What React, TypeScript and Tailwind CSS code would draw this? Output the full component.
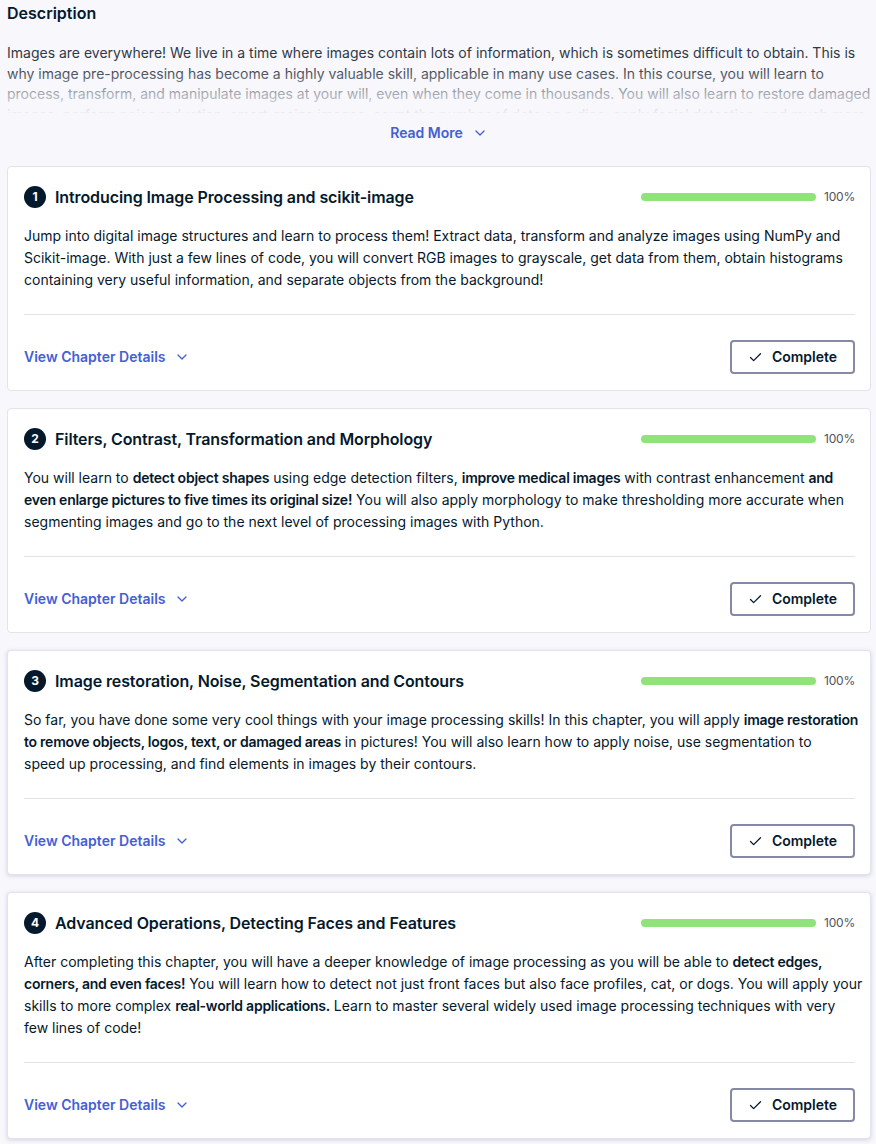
import React from "react";
import { ChevronDown, Check } from "lucide-react";

type Seg = string | { b: string };
type Chapter = { n: number; title: string; lines: Seg[][]; shadow?: boolean };

const chapters: Chapter[] = [
  {
    n: 1,
    title: "Introducing Image Processing and scikit-image",
    lines: [
      ["Jump into digital image structures and learn to process them! Extract data, transform and analyze images using NumPy and"],
      ["Scikit-image. With just a few lines of code, you will convert RGB images to grayscale, get data from them, obtain histograms"],
      ["containing very useful information, and separate objects from the background!"],
    ],
  },
  {
    n: 2,
    title: "Filters, Contrast, Transformation and Morphology",
    lines: [
      ["You will learn to ", { b: "detect object shapes" }, " using edge detection filters, ", { b: "improve medical images" }, " with contrast enhancement ", { b: "and" }],
      [{ b: "even enlarge pictures to five times its original size!" }, " You will also apply morphology to make thresholding more accurate when"],
      ["segmenting images and go to the next level of processing images with Python."],
    ],
  },
  {
    n: 3,
    title: "Image restoration, Noise, Segmentation and Contours",
    shadow: true,
    lines: [
      ["So far, you have done some very cool things with your image processing skills! In this chapter, you will apply ", { b: "image restoration" }],
      [{ b: "to remove objects, logos, text, or damaged areas" }, " in pictures! You will also learn how to apply noise, use segmentation to"],
      ["speed up processing, and find elements in images by their contours."],
    ],
  },
  {
    n: 4,
    title: "Advanced Operations, Detecting Faces and Features",
    shadow: true,
    lines: [
      ["After completing this chapter, you will have a deeper knowledge of image processing as you will be able to ", { b: "detect edges," }],
      [{ b: "corners, and even faces!" }, " You will learn how to detect not just front faces but also face profiles, cat, or dogs. You will apply your"],
      ["skills to more complex ", { b: "real-world applications." }, " Learn to master several widely used image processing techniques with very"],
      ["few lines of code!"],
    ],
  },
];

function ChapterCard({ c }: { c: Chapter }) {
  return (
    <div
      className={
        "bg-white border border-[#e3e3ec] rounded-[4px] pl-4 pr-[15px] pt-4 pb-4 " +
        (c.shadow ? "shadow-[0_1px_4px_rgba(48,57,105,0.18)]" : "")
      }
    >
      <div className="flex items-center h-7">
        <div className="w-[22px] h-[22px] rounded-full bg-[#05192d] text-white text-[12px] font-bold flex items-center justify-center shrink-0">
          {c.n}
        </div>
        <div className="ml-[9px] text-[16px] leading-[28px] font-semibold text-[#05192d] tracking-[-0.1px]">{c.title}</div>
        <div className="ml-auto flex items-center">
          <div className="w-[175px] h-[8px] rounded-full bg-[#90e378]" />
          <div className="ml-2 text-[12px] leading-[16px] text-[#4d5562] tracking-[-0.2px]">100%</div>
        </div>
      </div>
      <div className="mt-[14px] text-[14px] leading-[22px] text-[#05192d]">
        {c.lines.map((line, i) => (
          <div key={i} className="whitespace-nowrap h-[22px]">
            {line.map((s, j) =>
              typeof s === "string" ? (
                <span key={j}>{s}</span>
              ) : (
                <b key={j} className="font-semibold tracking-[-0.25px]">{s.b}</b>
              )
            )}
          </div>
        ))}
      </div>
      <div className="mt-[23px] h-px bg-[#e3e3ea]" />
      <div className="mt-[25px] h-[34px] flex items-center justify-between">
        <div className="flex items-center text-[14px] leading-[20px] font-semibold text-[#4460d3]">
          View Chapter Details
          <ChevronDown className="ml-[9px] w-[16px] h-[16px]" strokeWidth={2} />
        </div>
        <div className="w-[125px] h-[34px] border-2 border-[#8589a6] rounded-[4px] flex items-center justify-center text-[14px] leading-[20px] font-semibold text-[#05192d]">
          <Check className="w-[15px] h-[15px] mr-[9px]" strokeWidth={2} />
          Complete
        </div>
      </div>
    </div>
  );
}

export default function App() {
  return (
    <div className="min-h-[1144px] w-[876px] bg-[#f7f7fc] font-['Inter',sans-serif] overflow-hidden">
      <div className="pl-[7px] w-[871px]">
        <div className="pt-[3px] h-[21px] text-[16px] font-semibold text-[#05192d] leading-[21px]">Description</div>
        <div className="relative mt-[22px] h-[70px] overflow-hidden text-[14px] leading-[20.5px] text-[#303947]">
          <div className="whitespace-nowrap">Images are everywhere! We live in a time where images contain lots of information, which is sometimes difficult to obtain. This is</div>
          <div className="whitespace-nowrap">why image pre-processing has become a highly valuable skill, applicable in many use cases. In this course, you will learn to</div>
          <div className="whitespace-nowrap">process, transform, and manipulate images at your will, even when they come in thousands. You will also learn to restore damaged</div>
          <div className="whitespace-nowrap">images, perform noise reduction, smart-resize images, count the number of dots on a dice, apply facial detection, and much more.</div>
          <div className="absolute inset-x-0 top-[24px] bottom-0 bg-linear-to-b from-[#f7f7fc]/0 via-[#f7f7fc]/60 via-60% to-[#f7f7fc]/95" />
        </div>
        <div className="mt-[9px] flex justify-center items-center h-[22px] text-[14px] leading-[20px] font-semibold text-[#4460d3]">
          Read More
          <ChevronDown className="ml-[9px] w-[16px] h-[16px]" strokeWidth={2} />
        </div>
        <div className="mt-[22px] flex flex-col gap-[17px]">
          {chapters.map((c) => (
            <ChapterCard key={c.n} c={c} />
          ))}
        </div>
      </div>
    </div>
  );
}
